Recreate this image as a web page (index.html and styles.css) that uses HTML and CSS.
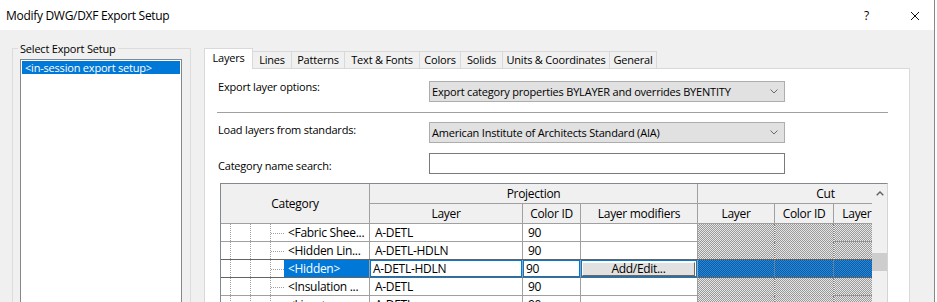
FILE: index.html
```html
<!DOCTYPE html>
<html>
<head>
<meta charset="utf-8">
<title>Modify DWG/DXF Export Setup</title>
<link rel="stylesheet" href="styles.css">
</head>
<body>
<div class="window">
  <div class="titlebar">
    <span class="title">Modify DWG/DXF Export Setup</span>
    <span class="help">?</span>
    <span class="close"><svg width="10" height="10" viewBox="0 0 10 10"><path d="M1 1 L9 9 M9 1 L1 9" stroke="#111" stroke-width="1" fill="none"/></svg></span>
  </div>
  <div class="main">
    <fieldset class="group">
      <legend>Select Export Setup</legend>
      <div class="listbox">
        <div class="item sel">&lt;in-session export setup&gt;</div>
      </div>
    </fieldset>
    <div class="tabctl">
      <div class="tabstrip">
        <div class="tab first active tab-layers">Layers</div>
        <div class="tab tab-lines">Lines</div>
        <div class="tab tab-patterns">Patterns</div>
        <div class="tab tab-text">Text &amp; Fonts</div>
        <div class="tab tab-colors">Colors</div>
        <div class="tab tab-solids">Solids</div>
        <div class="tab tab-units">Units &amp; Coordinates</div>
        <div class="tab tab-general">General</div>
      </div>
      <div class="panel">
        <div class="frow r1">
          <div class="lbl">Export layer options:</div>
          <div class="combo"><span>Export category properties BYLAYER and overrides BYENTITY</span><svg width="8" height="5" viewBox="0 0 8 5"><path d="M0.5 0.5 L4 4 L7.5 0.5" stroke="#6a6a6a" stroke-width="1" fill="none"/></svg></div>
        </div>
        <div class="sep"></div>
        <div class="frow r2">
          <div class="lbl">Load layers from standards:</div>
          <div class="combo"><span>American Institute of Architects Standard (AIA)</span><svg width="8" height="5" viewBox="0 0 8 5"><path d="M0.5 0.5 L4 4 L7.5 0.5" stroke="#6a6a6a" stroke-width="1" fill="none"/></svg></div>
        </div>
        <div class="frow r3">
          <div class="lbl">Category name search:</div>
          <div class="textbox"></div>
        </div>
        <div class="table">
          <div class="viewport">
            <div class="hdr">
              <div class="h-cat">Category</div>
              <div class="h-proj">Projection</div>
              <div class="h-cut">Cut</div>
              <div>Layer</div>
              <div>Color ID</div>
              <div>Layer modifiers</div>
              <div>Layer</div>
              <div>Color ID</div>
              <div class="h-last">Layer modifiers</div>
            </div>
            <div class="drow">
              <div class="cat"><span class="ind"></span><span class="ind"></span><span class="branch"></span><span class="name">&lt;Fabric Shee...</span></div>
              <div class="v">A-DETL</div>
              <div class="v">90</div>
              <div class="mod"></div>
              <div class="cut"></div><div class="cut"></div><div class="cut"></div>
            </div>
            <div class="drow">
              <div class="cat"><span class="ind"></span><span class="ind"></span><span class="branch"></span><span class="name">&lt;Hidden Lin...</span></div>
              <div class="v">A-DETL-HDLN</div>
              <div class="v">90</div>
              <div class="mod"></div>
              <div class="cut"></div><div class="cut"></div><div class="cut"></div>
            </div>
            <div class="drow sel">
              <div class="cat"><span class="ind"></span><span class="ind"></span><span class="branch"></span><span class="name">&lt;Hidden&gt;</span></div>
              <div class="v">A-DETL-HDLN</div>
              <div class="v">90</div>
              <div class="mod"><div class="btn">Add/Edit...</div></div>
              <div class="cut"></div><div class="cut"></div><div class="cut"></div>
            </div>
            <div class="drow">
              <div class="cat"><span class="ind"></span><span class="ind"></span><span class="branch"></span><span class="name">&lt;Insulation ...</span></div>
              <div class="v">A-DETL</div>
              <div class="v">90</div>
              <div class="mod"></div>
              <div class="cut"></div><div class="cut"></div><div class="cut"></div>
            </div>
            <div class="drow">
              <div class="cat"><span class="ind"></span><span class="ind"></span><span class="branch"></span><span class="name">&lt;Lines&gt;</span></div>
              <div class="v">A-DETL</div>
              <div class="v">90</div>
              <div class="mod"></div>
              <div class="cut"></div><div class="cut"></div><div class="cut"></div>
            </div>
          </div>
          <div class="sbar">
            <div class="sb-up"><svg width="8" height="5" viewBox="0 0 8 5"><path d="M0.7 4.3 L4 1 L7.3 4.3" stroke="#606060" stroke-width="1.4" fill="none"/></svg></div>
            <div class="sb-thumb"></div>
          </div>
        </div>
      </div>
    </div>
  </div>
</div>
</body>
</html>
```
FILE: styles.css
```css
* { box-sizing: border-box; }
html, body { margin: 0; padding: 0; background: #fff; }
body {
  font-family: "Open Sans", "Noto Sans", sans-serif;
  font-size: 11px;
  letter-spacing: -0.2px;
  color: #000;
  width: 937px;
  height: 302px;
  overflow: hidden;
}
.window {
  width: 935px;
  height: 302px;
  border-right: 1px solid #888;
  display: flex;
  flex-direction: column;
  overflow: hidden;
}
.titlebar {
  height: 30px;
  flex: none;
  background: #fff;
  display: flex;
  align-items: center;
  padding: 0 14px 0 6px;
}
.title { flex: 1; font-size: 12px; letter-spacing: -0.3px; }
.help { font-size: 12px; margin-right: 41px; }
.close { display: flex; margin-top: 2px; }

.main {
  flex: 1;
  background: #f0f0f0;
  display: flex;
  align-items: flex-start;
  overflow: hidden;
}
.group {
  flex: none;
  margin: 11px 0 0 12px;
  padding: 3px 8px 0 7px;
  border: 1px solid #dcdcdc;
  width: 179px;
  height: 320px;
  min-width: 0;
}
.group legend {
  padding: 0 2px;
  margin-left: -2px;
  line-height: 15px;
  font-size: 11px;
}
.listbox {
  background: #fff;
  border: 1px solid #828790;
  padding: 1px;
  height: 300px;
}
.item {
  height: 13px;
  line-height: 13px;
  padding-left: 3px;
  white-space: nowrap;
}
.item.sel { background: #0078d7; color: #fff; }

.tabctl { flex: none; margin: 18px 0 0 13px; width: 706px; }
.tabstrip { display: flex; align-items: flex-end; height: 20px; }
.tab {
  height: 17px;
  border: 1px solid #d9d9d9;
  border-bottom: 0;
  border-left: 0;
  line-height: 15px;
  text-align: center;
  white-space: nowrap;
  background: #f0f0f0;
}
.tab.first { border-left: 1px solid #d9d9d9; }
.tab.active {
  height: 21px;
  margin-bottom: -1px;
  padding-top: 1px;
  background: #fff;
  position: relative;
  z-index: 1;
}
.tab-layers { width: 49px; }
.tab-lines { width: 39px; }
.tab-patterns { width: 53px; }
.tab-text { width: 75px; }
.tab-colors { width: 41px; }
.tab-solids { width: 42px; }
.tab-units { width: 107px; }
.tab-general { width: 47px; }

.panel {
  border: 1px solid #d9d9d9;
  background: #fff;
  height: 260px;
  padding: 10px 0 0 13px;
}
.frow { display: flex; align-items: flex-start; }
.lbl { width: 211px; line-height: 15px; white-space: nowrap; }
.combo {
  width: 356px;
  height: 21px;
  border: 1px solid #adadad;
  background: #e1e1e1;
  display: flex;
  align-items: center;
  justify-content: space-between;
  padding: 0 6px 0 2px;
  white-space: nowrap;
}
.r1 .combo { margin-top: 2px; }
.sep { height: 1px; width: 671px; background: #a0a0a0; margin: 10px 0 0 -1px; }
.r2 { margin-top: 9px; }
.r3 { margin-top: 10px; }
.r3 .lbl { margin-top: 5px; }
.textbox { width: 356px; height: 21px; border: 1px solid #7a7a7a; background: #fff; }

.table {
  margin: 9px 0 0 2px;
  width: 668px;
  height: 200px;
  display: flex;
  border: 1px solid #828790;
  border-right-color: #d4d4d4;
}
.viewport {
  width: 651px;
  flex: none;
  overflow: hidden;
  font-size: 12px;
  letter-spacing: -0.3px;
}
.hdr, .drow {
  display: grid;
  grid-template-columns: 149px 153px 58px 117px 77px 59px 120px;
  width: 733px;
}
.hdr { grid-template-rows: 20px 20px; }
.hdr > div {
  background: #f0f0f0;
  border-right: 1px solid #a0a0a0;
  border-bottom: 1px solid #a0a0a0;
  display: flex;
  align-items: center;
  justify-content: center;
  white-space: nowrap;
}
.hdr > .h-cat { grid-row: 1 / 3; }
.hdr > .h-proj { grid-column: 2 / 5; }
.hdr > .h-cut { grid-column: 5 / 8; }
.hdr > .h-last { padding-right: 20px; }

.drow { height: 18px; }
.drow > div {
  border-right: 1px solid #a0a0a0;
  border-bottom: 1px solid #a0a0a0;
  line-height: 17px;
  white-space: nowrap;
  overflow: hidden;
}
.drow > .cat { display: flex; padding-left: 9px; }
.ind { flex: none; width: 20px; border-left: 1px dotted #a0a0a0; }
.branch {
  flex: none;
  width: 14px;
  border-left: 1px dotted #a0a0a0;
  display: flex;
  align-items: center;
}
.branch::after {
  content: "";
  display: block;
  width: 100%;
  margin-top: 2px;
  border-top: 1px dotted #a0a0a0;
}
.name { flex: 1; padding-left: 4px; overflow: hidden; }
.drow > .v { padding-left: 5px; }

.drow > .cut {
  background: repeating-conic-gradient(#9a9a9a 0% 25%, #e6e6e6 0% 50%) 0 0 / 2px 2px;
  border-right: 1px dotted #808080;
  border-bottom: 1px dotted #909090;
}

.drow.sel { position: relative; }
.drow.sel::before {
  content: "";
  position: absolute;
  left: 0;
  right: 0;
  top: -1px;
  height: 1px;
  background: #646464;
}
.drow.sel > div { border-bottom: 1px solid #646464; }
.sel .name { background: #0078d7; color: #fff; }
.drow.sel > .v { background: #fff; box-shadow: inset 0 0 0 1px #0078d7; padding-left: 3px; }
.drow.sel > .mod { box-shadow: inset 0 0 0 1px #0078d7; padding: 2px 2px 1px 1px; }
.btn {
  height: 14px;
  line-height: 12px;
  background: #e1e1e1;
  border: 1px solid;
  border-color: #fdfdfd #696969 #696969 #fdfdfd;
  text-align: center;
}
.drow.sel > .cut {
  background: repeating-conic-gradient(#0a5ea8 0% 25%, #2b87d6 0% 50%) 0 0 / 2px 2px;
}

.sbar { flex: none; width: 15px; background: #f0f0f0; }
.sb-up { height: 17px; padding: 7px 0 0 4px; display: flex; align-items: flex-start; }
.sb-thumb { margin-top: 52px; height: 18px; background: #cdcdcd; }
```
